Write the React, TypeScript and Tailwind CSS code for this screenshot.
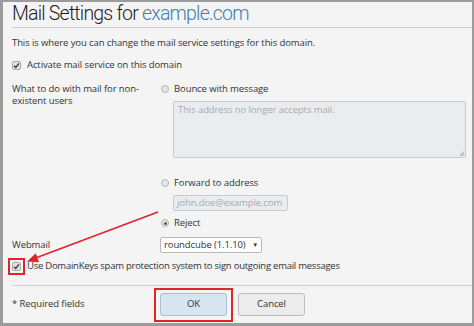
import React from "react";

const font = { fontFamily: '"Open Sans", "Noto Sans", sans-serif' };

const Radio = ({ checked }: { checked?: boolean }) => (
  <span className="inline-flex items-center justify-center w-[8px] h-[8px] rounded-full border border-[#b5b5b5] bg-[#e6e6e6] mr-[5px]">
    {checked && <span className="w-[3px] h-[3px] rounded-full bg-[#555]" />}
  </span>
);

const Check = () => (
  <span className="inline-flex items-center justify-center w-[9px] h-[9px] rounded-[2px] border border-[#a8a8a8] bg-[#e4e4e4]">
    <svg width="7" height="7" viewBox="0 0 8 8">
      <path d="M1.2 4.2 L3.2 6.2 L6.8 1.5" fill="none" stroke="#333" strokeWidth="1.5" />
    </svg>
  </span>
);

export default function App() {
  return (
    <div
      className="relative w-[474px] h-[326px] overflow-hidden bg-[#f4f4f4] border-l-[3px] border-t-2 border-r-2 border-b-[3px] border-[#9c9c9c] text-[9.5px] tracking-[-0.1px] text-[#333]"
      style={font}
    >
      <div className="pl-[9px]">
        <div
          className="h-[24px] flex items-end text-[19.5px] font-light leading-none text-[#1e1e1e] pb-[3px] tracking-[-0.8px]"
          style={{ fontFamily: 'Roboto, "Open Sans", sans-serif' }}
        >
          Mail Settings for&nbsp;<span className="text-[#3f7db5]">example.com</span>
        </div>
        <div className="h-px bg-[#cfcfcf] mt-[1px]" />

        <div className="mt-[8px] h-[14px] leading-[14px]">
          This is where you can change the mail service settings for this domain.
        </div>

        <div className="mt-[8px] flex items-center h-[14px]">
          <Check />
          <span className="ml-[6px]">Activate mail service on this domain</span>
        </div>

        <div className="mt-[11px] flex">
          <div className="w-[149px] leading-[12px]">
            What to do with mail for non-existent users
          </div>
          <div className="flex-1 pr-[6px]">
            <div className="flex items-center h-[12px]">
              <Radio />
              <span>Bounce with message</span>
            </div>
            <div className="ml-[12px] mt-[6px] h-[57px] border border-[#c3cbd3] bg-[#e9edf0] rounded-[2px] px-[4px] py-[1px] text-[#a9a9a9] relative">
              This address no longer accepts mail.
              <span className="absolute right-[1px] bottom-[1px] text-[6px] leading-none text-[#bbb]">◢</span>
            </div>

            <div className="flex items-center h-[12px] mt-[19px]">
              <Radio />
              <span>Forward to address</span>
            </div>
            <div className="ml-[12px] mt-[6px] w-[115px] h-[16px] border border-[#c3cbd3] bg-[#e9edf0] rounded-[2px] px-[3px] leading-[14px] text-[#a9a9a9]">
              john.doe@example.com
            </div>

            <div className="flex items-center h-[12px] mt-[6px]">
              <Radio checked />
              <span>Reject</span>
            </div>
          </div>
        </div>

        <div className="mt-[8px] flex items-center h-[16px]">
          <div className="w-[148px]">Webmail</div>
          <div className="flex items-center h-[16px] w-[102px] border border-[#b8b8b8] bg-white rounded-[2px] px-[3px]">
            roundcube (1.1.10)
            <span className="ml-auto text-[6px] text-[#333]">▼</span>
          </div>
        </div>

        <div className="mt-[6px] flex items-center h-[14px]">
          <span className="relative inline-flex">
            <Check />
            <span className="absolute -left-[4px] -top-[4px] w-[17px] h-[17px] border-2 border-[#e0242c]" />
          </span>
          <span className="ml-[6px] tracking-[-0.25px]">Use DomainKeys spam protection system to sign outgoing email messages</span>
        </div>

        <div className="h-px bg-[#cfcfcf] mt-[12px]" />

        <div className="flex items-center mt-[7px]">
          <div className="w-[148px] text-[#333]">* Required fields</div>
          <div className="relative">
            <button className="w-[67px] h-[23px] rounded-[3px] border border-[#aebccb] bg-[#d5e5f2] text-[#333]">OK</button>
            <span className="absolute -left-[6px] -top-[5px] -right-[6px] -bottom-[6px] border-2 border-[#e0242c]" />
          </div>
          <button className="ml-[11px] w-[67px] h-[23px] rounded-[3px] border border-[#bdbdbd] bg-[#ececec] text-[#333]">Cancel</button>
        </div>
      </div>

      <svg className="absolute left-0 top-0 pointer-events-none" width="474" height="326">
        <line x1="155" y1="210" x2="34" y2="255.6" stroke="#e0242c" strokeWidth="1.6" />
        <path d="M24 259.4 L36 260.2 L32.8 251.2 Z" fill="#e0242c" />
      </svg>
    </div>
  );
}
